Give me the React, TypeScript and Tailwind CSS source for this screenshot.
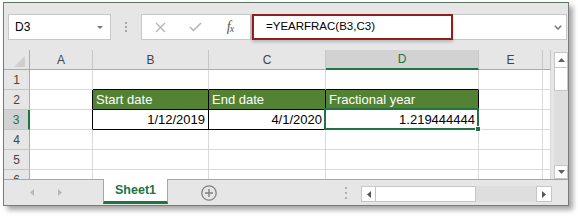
import React from "react";

const colW = ["w-[63px]", "w-[116px]", "w-[117px]", "w-[153px]", "w-[64px]", "w-[8px]"];
const letters = ["A", "B", "C", "D", "E", ""];

type Cell = { text?: string; right?: boolean; green?: boolean; rb?: boolean; bb?: boolean; sel?: boolean };

const rows: Cell[][] = [
  [{ rb: false }, { bb: true }, { bb: true }, { bb: true }, {}, {}],
  [
    { rb: true },
    { text: "Start date", green: true, rb: true, bb: true },
    { text: "End date", green: true, rb: true, bb: true },
    { text: "Fractional year", green: true, rb: true, bb: true },
    {},
    {},
  ],
  [
    { rb: true },
    { text: "1/12/2019", right: true, rb: true, bb: true },
    { text: "4/1/2020", right: true, rb: true, bb: true },
    { text: "1.219444444", right: true, rb: true, bb: true, sel: true },
    {},
    {},
  ],
  [{}, {}, {}, {}, {}, {}],
  [{}, {}, {}, {}, {}, {}],
  [{}, {}, {}, {}, {}, {}],
];

function Tri({ dir, color }: { dir: "up" | "down" | "left" | "right"; color: string }) {
  const pts =
    dir === "up"
      ? "0,4 7,4 3.5,0"
      : dir === "down"
      ? "0,0 7,0 3.5,4"
      : dir === "left"
      ? "4,0 4,7 0,3.5"
      : "0,0 0,7 4,3.5";
  const w = dir === "up" || dir === "down" ? 7 : 4;
  const h = dir === "up" || dir === "down" ? 4 : 7;
  return (
    <svg width={w} height={h} viewBox={`0 0 ${w} ${h}`}>
      <polygon points={pts} fill={color} />
    </svg>
  );
}

export default function App() {
  return (
    <div className="w-[578px] h-[216px] bg-white overflow-hidden font-['Liberation_Sans',Arial,sans-serif]">
      <div className="ml-[3px] mt-[2px] w-[566px] h-[204px] border border-[#7a7a7a] border-t-[#5b7562] bg-[#e6e6e6] shadow-[4px_4px_5px_rgba(0,0,0,0.35)] flex flex-col">
        {/* Formula bar */}
        <div className="h-[47px] shrink-0 flex items-start pt-[11px] pl-[4px]">
          <div className="w-[103px] h-[26px] bg-white border border-[#c6c6c6] flex items-center pl-[6px] pr-[7px]">
            <span className="text-[12px] text-black leading-none">D3</span>
            <span className="ml-auto flex">
              <svg width="6" height="3" viewBox="0 0 6 3">
                <polygon points="0,0 6,0 3,3" fill="#777" />
              </svg>
            </span>
          </div>
          <div className="ml-[14px] mt-[8px] flex flex-col gap-[2px]">
            <div className="w-[2px] h-[2px] bg-[#a6a6a6]" />
            <div className="w-[2px] h-[2px] bg-[#a6a6a6]" />
            <div className="w-[2px] h-[2px] bg-[#a6a6a6]" />
          </div>
          <div className="ml-[14px] w-[110px] h-[26px] bg-white border border-[#c6c6c6] flex items-center pl-[1px]">
            <span className="w-[35px] flex justify-center">
              <svg width="11" height="11" viewBox="0 0 11 11">
                <path d="M1 1 L10 10 M10 1 L1 10" stroke="#b3b3b3" strokeWidth="1.3" fill="none" />
              </svg>
            </span>
            <span className="w-[35px] flex justify-center">
              <svg width="13" height="10" viewBox="0 0 13 10">
                <path d="M1 5 L4.5 8.5 L12 1" stroke="#b3b3b3" strokeWidth="1.5" fill="none" />
              </svg>
            </span>
            <span className="w-[35px] flex justify-center items-end font-['Liberation_Serif',serif] italic text-[#555] leading-none">
              <span className="text-[14px]">f</span>
              <span className="text-[10px] -ml-[1px]">x</span>
            </span>
          </div>
          <div className="w-[316px] h-[26px] bg-white border border-[#c6c6c6] flex items-center pr-[4px]">
            <div className="w-[201px] h-[26px] -my-[1px] border-2 border-[#8e2020] shadow-[0_2px_3px_rgba(0,0,0,0.2)] flex items-center pl-[12px]">
              <span className="text-[11.5px] text-black leading-none whitespace-nowrap">=YEARFRAC(B3,C3)</span>
            </div>
            <span className="ml-auto flex">
              <svg width="8" height="5" viewBox="0 0 8 5">
                <path d="M0.8 0.8 L4 4 L7.2 0.8" stroke="#7a7a7a" strokeWidth="1.6" fill="none" />
              </svg>
            </span>
          </div>
        </div>

        {/* Grid area */}
        <div className="h-[129px] shrink-0 flex">
          <div className="w-[547px] h-full overflow-hidden flex flex-col">
            {/* column headers */}
            <div className="h-[20px] shrink-0 flex">
              <div className="w-[26px] h-full border-r border-b border-[#ababab] relative">
                <svg className="absolute left-[10px] top-[6px]" width="12" height="12" viewBox="0 0 12 12">
                  <polygon points="11,0 11,11 0,11" fill="#cfcfcf" />
                </svg>
              </div>
              {letters.map((l, i) =>
                l === "D" ? (
                  <div
                    key={i}
                    className={`${colW[i]} h-full border-r border-r-[#c6c6c6] border-b-2 border-b-[#217346] bg-[#d2d2d2] flex items-center justify-center text-[12px] text-[#217346]`}
                  >
                    {l}
                  </div>
                ) : (
                  <div
                    key={i}
                    className={`${colW[i]} h-full border-r border-r-[#c6c6c6] border-b border-b-[#ababab] flex items-center justify-center text-[12px] text-[#444]`}
                  >
                    {l}
                  </div>
                )
              )}
            </div>
            {rows.map((row, ri) => (
              <div key={ri} className="h-[20px] shrink-0 flex">
                {ri === 2 ? (
                  <div className="w-[26px] h-full border-r-2 border-r-[#217346] border-b border-b-[#c6c6c6] bg-[#d2d2d2] flex items-center justify-center text-[12px] text-[#217346]">
                    {ri + 1}
                  </div>
                ) : (
                  <div className="w-[26px] h-full border-r border-r-[#ababab] border-b border-b-[#c6c6c6] flex items-center justify-center text-[12px] text-[#444]">
                    {ri + 1}
                  </div>
                )}
                {row.map((c, ci) => (
                  <div
                    key={ci}
                    className={`${colW[ci]} h-full relative border-r border-b ${c.rb ? "border-r-black" : "border-r-[#d9d9d9]"} ${
                      c.bb ? "border-b-black" : "border-b-[#d9d9d9]"
                    } ${c.green ? "bg-[#548235] text-white" : "bg-white text-black"} ${
                      c.right ? "text-right pr-[3px]" : "text-left pl-[3px]"
                    } text-[13px] leading-[19px] whitespace-nowrap`}
                  >
                    {c.text}
                    {c.sel && (
                      <>
                        <div className="absolute -left-[2px] -top-[2px] -right-[1px] -bottom-[1px] border-2 border-[#217346] z-10" />
                        <div className="absolute -right-[3px] -bottom-[3px] w-[6px] h-[6px] bg-[#217346] border border-white z-20" />
                      </>
                    )}
                  </div>
                ))}
              </div>
            ))}
          </div>
          {/* vertical scrollbar */}
          <div className="ml-[3px] w-[14px] h-full pt-[2px] flex flex-col">
            <div className="h-[16px] shrink-0 bg-white border border-[#c6c6c6] flex items-center justify-center">
              <Tri dir="up" color="#606060" />
            </div>
            <div className="h-[23px] shrink-0 bg-white border-x border-b border-[#c6c6c6]" />
            <div className="flex-1 bg-[#dedede]" />
            <div className="h-[14px] shrink-0 bg-white border border-[#c6c6c6] flex items-center justify-center">
              <Tri dir="down" color="#606060" />
            </div>
          </div>
        </div>

        {/* Tab bar */}
        <div className="h-[26px] shrink-0 flex items-start">
          <div className="w-[99px] h-full border-t border-[#a6a6a6] flex items-center pl-[26px]">
            <Tri dir="left" color="#b8b8b8" />
            <span className="ml-[24px] flex">
              <Tri dir="right" color="#b8b8b8" />
            </span>
          </div>
          <div className="w-[65px] h-[25px] bg-white border-x border-[#a6a6a6] border-b-[3px] border-b-[#217346] flex items-center justify-center pt-[1px]">
            <span className="text-[12.5px] font-bold text-[#217346] leading-none">Sheet1</span>
          </div>
          <div className="flex-1 h-full border-t border-[#a6a6a6] flex items-start">
            <span className="ml-[33px] mt-[5px] flex">
              <svg width="16" height="16" viewBox="0 0 16 16">
                <circle cx="8" cy="8" r="7.2" stroke="#808080" strokeWidth="1.3" fill="none" />
                <path d="M8 4 V12 M4 8 H12" stroke="#808080" strokeWidth="1.4" />
              </svg>
            </span>
            <div className="ml-[128px] mt-[7px] flex flex-col gap-[3px]">
              <div className="w-[2px] h-[2px] bg-[#b0b0b0]" />
              <div className="w-[2px] h-[2px] bg-[#b0b0b0]" />
              <div className="w-[2px] h-[2px] bg-[#b0b0b0]" />
            </div>
            <div className="ml-[14px] mt-[6px] h-[16px] flex">
              <div className="w-[15px] h-full bg-white border border-[#c6c6c6] flex items-center justify-center">
                <Tri dir="left" color="#555" />
              </div>
              <div className="w-[100px] h-full bg-white border-y border-r border-[#c6c6c6]" />
              <div className="w-[60px] h-full bg-[#dedede]" />
              <div className="w-[16px] h-full bg-white border border-[#c6c6c6] flex items-center justify-center">
                <Tri dir="right" color="#555" />
              </div>
            </div>
          </div>
        </div>
      </div>
    </div>
  );
}
